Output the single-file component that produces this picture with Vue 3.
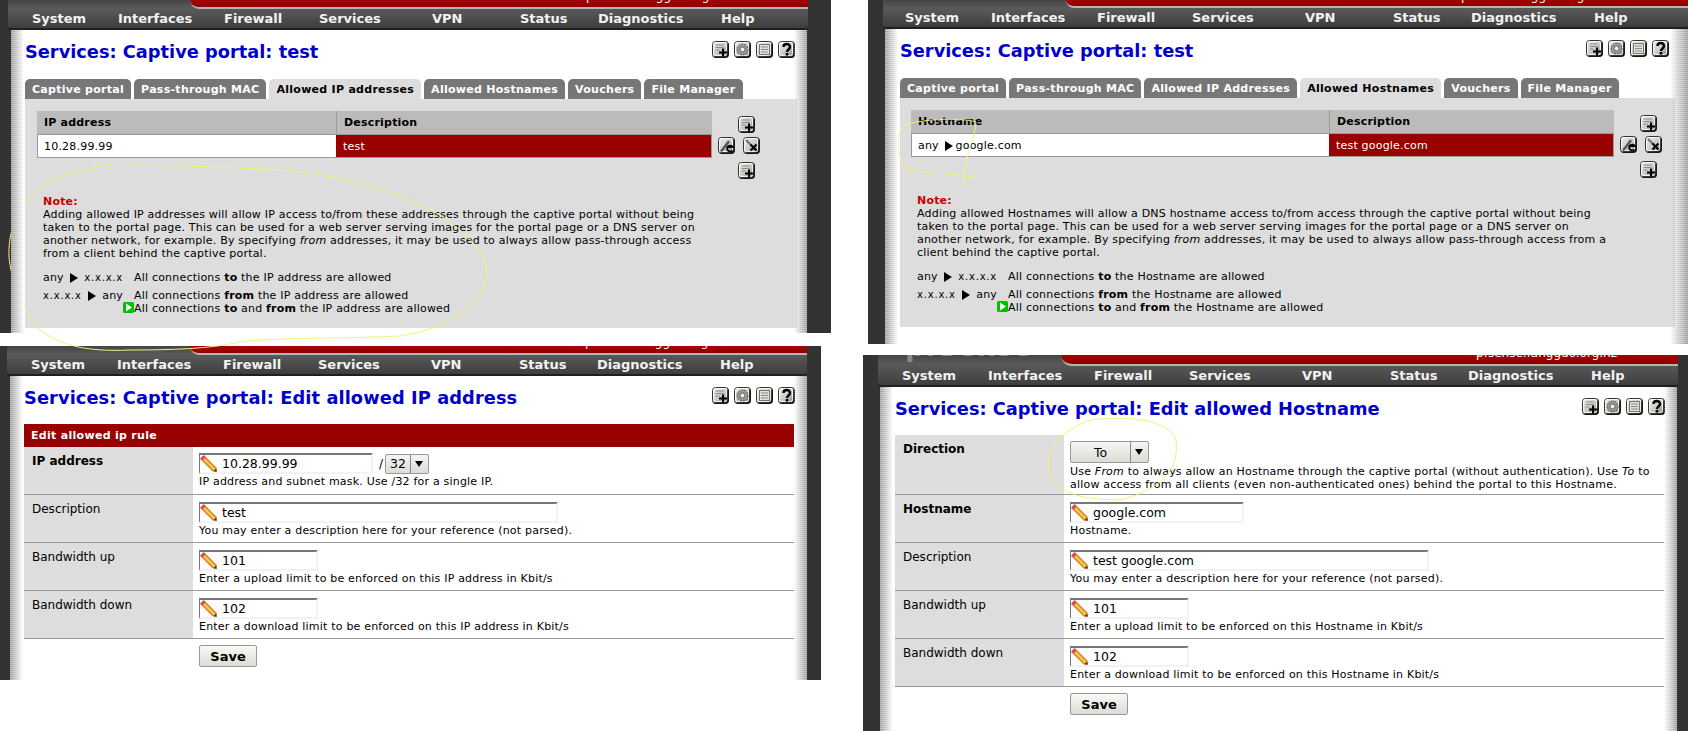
<template>
  <div class="canvas">
    <svg class="defs" width="0" height="0">
      <defs>
        <linearGradient id="bevel" x1="0" y1="0" x2="1" y2="1">
          <stop offset="0" stop-color="#f4f4f0" />
          <stop offset="0.55" stop-color="#c8c8c2" />
          <stop offset="1" stop-color="#77776f" />
        </linearGradient>
        <symbol id="i-box" viewBox="0 0 17 17">
          <rect x="0.5" y="0.5" width="16" height="16" rx="3" fill="url(#bevel)" stroke="#33332f" />
          <rect x="1.5" y="1.5" width="13" height="13" rx="2" fill="none" stroke="#fff" stroke-opacity="0.8" />
          <path d="M16 2.500v11a2.500 2.500 0 0 1-2.500 2.500H2.500" fill="none" stroke="#111" stroke-width="1.500" />
        </symbol>
        <symbol id="i-plus" viewBox="0 0 17 17">
          <use href="#i-box" width="17" height="17" />
          <path d="M3.5 4h8M3.5 6.5h8M3.5 9h4" stroke="#8a8a84" stroke-width="1" />
          <path d="M11 7.5v8M7 11.5h8" stroke="#000" stroke-width="2" />
        </symbol>
        <symbol id="i-gear" viewBox="0 0 17 17">
          <use href="#i-box" width="17" height="17" />
          <circle cx="8.5" cy="8.5" r="5.5" fill="#9a9a94" stroke="#55554f" stroke-dasharray="2 1" />
          <circle cx="8.5" cy="8.5" r="2.5" fill="#eee" stroke="#66665f" />
        </symbol>
        <symbol id="i-list" viewBox="0 0 17 17">
          <use href="#i-box" width="17" height="17" />
          <rect x="3.5" y="3.5" width="10" height="10" fill="#e2e2dc" stroke="#77776f" />
          <path d="M5 6h7M5 8.5h7M5 11h7" stroke="#8a8a84" />
        </symbol>
        <symbol id="i-help" viewBox="0 0 17 17">
          <use href="#i-box" width="17" height="17" />
          <path d="M5.5 6c0-4 6.500-4 6.500 0 0 2.500-3 2.500-3 5" fill="none" stroke="#000" stroke-width="2.400" />
          <rect x="7.700" y="12" width="2.600" height="2.600" fill="#000" />
        </symbol>
        <symbol id="i-edit" viewBox="0 0 17 17">
          <use href="#i-box" width="17" height="17" />
          <path d="M2 14L10 3.500l2 1.500L4 15z" fill="#55554f" />
          <path d="M14.500 13.500a3 3 0 1 1 .2-3.500H8.500" fill="none" stroke="#000" stroke-width="1.800" />
        </symbol>
        <symbol id="i-del" viewBox="0 0 17 17">
          <use href="#i-box" width="17" height="17" />
          <path d="M3 3l5 5" stroke="#77776f" stroke-width="2.400" />
          <path d="M7.500 7.500l6 6M13.500 7.500l-6 6" stroke="#000" stroke-width="2.200" />
        </symbol>
        <symbol id="i-pencil" viewBox="0 0 18 18">
          <path d="M0.500 4L4 0.500 17 13.500 17.500 17.500 13.500 17z" fill="#f2a11f" stroke="#a8560a" stroke-width="0.8" />
          <path d="M3.500 3.500L15.500 15.500" stroke="#fbd67a" stroke-width="1.400" />
          <path d="M0.500 4L4 0.500 6 2.500 2.500 6z" fill="#e8406a" />
          <path d="M14.500 17l2.500-2.500 .5 3z" fill="#333" />
        </symbol>
      </defs>
    </svg>

    <section v-for="p in listPanels" :key="p.id" class="win" :class="p.id">
      <header class="nav-wrap">
        <div class="brand"><span class="host">pfsense.fangguo.org.hz</span></div>
        <nav class="nav">
          <span v-for="m in menu" :key="m">{{ m }}</span>
        </nav>
      </header>
      <main class="page">
        <div class="title-row">
          <h1>{{ p.title }}</h1>
          <div class="tools">
            <svg v-for="t in tools" :key="t"><use :href="'#' + t" /></svg>
          </div>
        </div>
        <div class="tabs">
          <span v-for="t in p.tabs" :key="t" class="tab" :class="{ active: t === p.active }">{{ t }}</span>
        </div>
        <div class="tab-body">
          <div class="list-row">
            <div class="table">
              <div class="th col1">{{ p.col }}</div>
              <div class="th col2">Description</div>
              <div class="td col1">
                <template v-if="p.any">any <i class="tri"></i> </template>{{ p.value }}
              </div>
              <div class="td col2 red">{{ p.desc }}</div>
            </div>
            <div class="row-icons">
              <svg class="plus"><use href="#i-plus" /></svg>
              <div class="pair">
                <svg><use href="#i-edit" /></svg>
                <svg><use href="#i-del" /></svg>
              </div>
              <svg class="plus last"><use href="#i-plus" /></svg>
            </div>
          </div>
          <div class="note">
            <div class="note-head">Note:</div>
            <p>
              {{ p.note[0] }}<br />{{ p.note[1] }}<br />{{ p.note[2] }}<em>from</em>{{ p.note[3] }}<br />{{ p.note[4] }}
            </p>
            <div class="legend first">
              <span class="dir">any <i class="tri"></i> <span class="xs">x.x.x.x</span></span>
              <span>All connections <b>to</b> the {{ p.noun }} are allowed</span>
            </div>
            <div class="legend second">
              <span class="dir"><span class="xs">x.x.x.x</span> <i class="tri"></i> any</span>
              <span>All connections <b>from</b> the {{ p.noun }} are allowed</span>
            </div>
            <div class="legend">
              <span class="dir right">
                <svg class="green" viewBox="0 0 11 11">
                  <rect width="11" height="11" rx="1.500" fill="#00c000" />
                  <path d="M3 1.500L9 5.500 3 9.500z" fill="#fff" />
                </svg>
              </span>
              <span>All connections <b>to</b> and <b>from</b> the {{ p.noun }} are allowed</span>
            </div>
          </div>
        </div>
      </main>
    </section>

    <section v-for="p in editPanels" :key="p.id" class="win" :class="p.id">
      <header class="nav-wrap">
        <span v-if="p.logo" class="logo">{{ p.logo }}</span>
        <div class="brand">
          <span class="host">pfsense.fangguo.org.hz</span>
        </div>
        <nav class="nav">
          <span v-for="m in menu" :key="m">{{ m }}</span>
        </nav>
      </header>
      <main class="page">
        <div class="title-row">
          <h1>{{ p.title }}</h1>
          <div class="tools">
            <svg v-for="t in tools" :key="t"><use :href="'#' + t" /></svg>
          </div>
        </div>
        <div class="form">
          <div v-if="p.bar" class="bar">{{ p.bar }}</div>
          <div v-for="r in p.rows" :key="r.label" class="form-row">
            <div class="label" :class="{ strong: r.strong }">{{ r.label }}</div>
            <div class="field">
              <div v-if="r.select" class="select wide">
                <span>{{ r.select }}</span><i></i>
              </div>
              <div v-else class="input-line">
                <div class="input" :class="r.size">
                  <svg><use href="#i-pencil" /></svg>{{ r.value }}
                </div>
                <template v-if="r.mask">
                  <span class="slash">/</span>
                  <div class="select"><span>{{ r.mask }}</span><i></i></div>
                </template>
              </div>
              <div class="hint">
                <template v-if="r.select">
                  Use <em>From</em> to always allow an Hostname through the captive portal (without authentication). Use <em>To</em> to<br />allow access from all clients (even non-authenticated ones) behind the portal to this Hostname.
                </template>
                <template v-else>{{ r.hint }}</template>
              </div>
            </div>
          </div>
          <div class="save-row">
            <button type="button" class="save">Save</button>
          </div>
        </div>
      </main>
    </section>

    <!-- yellow marker scribbles drawn over the screenshots -->
    <svg class="scribble" viewBox="0 0 1688 731" width="1688" height="731" fill="none">
      <path d="M113 164C80 170 52 176 34 192 14 212 8 236 9 258 12 285 24 310 40 330 60 345 85 352 130 350 170 350 210 349 240 342 280 337 340 339 400 336 440 330 478 310 486 280 490 255 470 235 435 212 395 190 345 178 290 170 240 168 175 165 130 165"
        stroke="#f2f27a" stroke-width="1" />
      <path d="M905 125C925 118 965 118 976 122 975 140 962 160 964 185M976 178C950 172 915 174 905 168 896 150 895 135 905 125" stroke="#f2f27a" stroke-width="1" />
      <path d="M1090 420C1075 425 1048 440 1048 465 1050 490 1075 500 1120 500 1160 490 1180 470 1176 440 1170 420 1130 415 1090 420Z" stroke="#f2f27a" stroke-width="1" />
    </svg>
  </div>
</template>

<script setup>
const menu = ['System', 'Interfaces', 'Firewall', 'Services', 'VPN', 'Status', 'Diagnostics', 'Help']
const tools = ['i-plus', 'i-gear', 'i-list', 'i-help']

const listPanels = [
  {
    id: 'p1',
    title: 'Services: Captive portal: test',
    tabs: ['Captive portal', 'Pass-through MAC', 'Allowed IP addresses', 'Allowed Hostnames', 'Vouchers', 'File Manager'],
    active: 'Allowed IP addresses',
    col: 'IP address',
    any: false,
    value: '10.28.99.99',
    desc: 'test',
    noun: 'IP address',
    note: [
      'Adding allowed IP addresses will allow IP access to/from these addresses through the captive portal without being',
      'taken to the portal page. This can be used for a web server serving images for the portal page or a DNS server on',
      'another network, for example. By specifying ',
      ' addresses, it may be used to always allow pass-through access',
      'from a client behind the captive portal.',
    ],
  },
  {
    id: 'p2',
    title: 'Services: Captive portal: test',
    tabs: ['Captive portal', 'Pass-through MAC', 'Allowed IP Addresses', 'Allowed Hostnames', 'Vouchers', 'File Manager'],
    active: 'Allowed Hostnames',
    col: 'Hostname',
    any: true,
    value: 'google.com',
    desc: 'test google.com',
    noun: 'Hostname',
    note: [
      'Adding allowed Hostnames will allow a DNS hostname access to/from access through the captive portal without being',
      'taken to the portal page. This can be used for a web server serving images for the portal page or a DNS server on',
      'another network, for example. By specifying ',
      ' addresses, it may be used to always allow pass-through access from a',
      'client behind the captive portal.',
    ],
  },
]

const editPanels = [
  {
    id: 'p3',
    title: 'Services: Captive portal: Edit allowed IP address',
    bar: 'Edit allowed ip rule',
    rows: [
      { label: 'IP address', strong: true, value: '10.28.99.99', size: 'mid', mask: '32', hint: 'IP address and subnet mask. Use /32 for a single IP.' },
      { label: 'Description', value: 'test', size: 'long', hint: 'You may enter a description here for your reference (not parsed).' },
      { label: 'Bandwidth up', value: '101', size: 'short', hint: 'Enter a upload limit to be enforced on this IP address in Kbit/s' },
      { label: 'Bandwidth down', value: '102', size: 'short', hint: 'Enter a download limit to be enforced on this IP address in Kbit/s' },
    ],
  },
  {
    id: 'p4',
    logo: 'pfSense',
    title: 'Services: Captive portal: Edit allowed Hostname',
    rows: [
      { label: 'Direction', strong: true, select: 'To' },
      { label: 'Hostname', strong: true, value: 'google.com', size: 'mid', hint: 'Hostname.' },
      { label: 'Description', value: 'test google.com', size: 'long', hint: 'You may enter a description here for your reference (not parsed).' },
      { label: 'Bandwidth up', value: '101', size: 'short', hint: 'Enter a upload limit to be enforced on this Hostname in Kbit/s' },
      { label: 'Bandwidth down', value: '102', size: 'short', hint: 'Enter a download limit to be enforced on this Hostname in Kbit/s' },
    ],
  },
]
</script>

<style>
html,
body {
  margin: 0;
  background: #fff;
  overflow: hidden;
}
</style>

<style scoped>
.canvas {
  position: relative;
  width: 1688px;
  height: 731px;
  overflow: hidden;
  background: #fff;
  font-family: 'DejaVu Sans', Verdana, sans-serif;
  font-size: 11px;
  color: #000;
}

.defs {
  position: absolute;
}

/* the four pasted screenshots sit freely on the canvas */
.win {
  position: absolute;
  overflow: hidden;
  background: #333;
}

.p1 {
  left: 0;
  top: 0;
  width: 831px;
  height: 333px;
  --nav-l: 8px;
  --page-l: 11px;
  --page-w: 796px;
  --nav-w: 800px;
  --red-l: 182px;
  --brand-h: 7px;
  --host-r: 81px;
  --host-b: 4px;
}

.p2 {
  left: 868px;
  top: 0;
  width: 820px;
  height: 344px;
  --nav-l: 15px;
  --page-l: 17px;
  --page-w: 803px;
  --nav-w: 805px;
  --red-l: 183px;
  --brand-h: 6px;
  --host-r: 86px;
  --host-b: 3px;
}

.p3 {
  left: 0;
  top: 346px;
  width: 821px;
  height: 334px;
  --nav-l: 7px;
  --page-l: 10px;
  --page-w: 797px;
  --nav-w: 800px;
  --red-l: 183px;
  --brand-h: 7px;
  --host-r: 81px;
  --host-b: 4px;
}

.p4 {
  left: 863px;
  top: 355px;
  width: 825px;
  height: 376px;
  --nav-l: 15px;
  --page-l: 17px;
  --page-w: 797px;
  --nav-w: 800px;
  --red-l: 183px;
  --brand-h: 9px;
  --host-r: 61px;
  --host-b: 4px;
}

.nav-wrap {
  position: relative;
  overflow: hidden;
  margin-left: var(--nav-l);
  width: var(--nav-w);
  background: linear-gradient(#444, #5a5a5a 30%, #3e3e3e);
  border-bottom: 2px solid #1f1f1f;
  border-radius: 0 0 3px 3px;
}

/* only the foot of the logo shows above the nav in the cropped shot */
.logo {
  position: absolute;
  left: 27px;
  top: -22px;
  color: #8a8a8a;
  font-size: 28px;
  line-height: 28px;
  font-weight: 700;
}

.brand {
  height: var(--brand-h);
  margin-left: var(--red-l);
  background: linear-gradient(#a80000, #8f0000);
  border-bottom: 2px solid #b5b5b5;
  border-bottom-left-radius: 12px;
  overflow: hidden;
  position: relative;
}

.host {
  position: absolute;
  right: var(--host-r);
  bottom: var(--host-b);
  color: #fff;
  font-size: 12px;
  line-height: 13px;
  white-space: nowrap;
}

.nav {
  display: grid;
  grid-template-columns: 86px 106px 95px 113px 88px 78px 123px 1fr;
  padding: 2px 0 0 24px;
  height: 17px;
  color: #f2f2f2;
  font-size: 13px;
  font-weight: 700;
  line-height: 16px;
}

.p2 .nav {
  padding-left: 22px;
}

.page {
  position: relative;
  margin-left: var(--page-l);
  width: var(--page-w);
  height: 100%;
  background: #fff;
  padding-left: 14px;
  box-sizing: border-box;
}

.p2 .page,
.p4 .page {
  padding-left: 15px;
}

.page::before,
.page::after {
  content: '';
  position: absolute;
  top: 0;
  bottom: 0;
  width: 13px;
  z-index: 2;
}

.page::before {
  left: 0;
  background:
    repeating-linear-gradient(0deg, rgba(255, 255, 255, 0.35) 0 1px, transparent 1px 2px),
    linear-gradient(90deg, #9a9a9a, #fff);
}

.page::after {
  right: 0;
  background:
    repeating-linear-gradient(0deg, rgba(255, 255, 255, 0.35) 0 1px, transparent 1px 2px),
    linear-gradient(270deg, #9a9a9a, rgba(255, 255, 255, 0));
}

.p2 .page::after {
  width: 18px;
}

.title-row {
  position: relative;
  height: 49px;
}

h1 {
  margin: 0;
  padding-top: 11px;
  color: #0000cc;
  font-size: 17.800px;
  line-height: 22px;
  font-weight: 700;
}

.p3 h1 {
  letter-spacing: 0.1px;
}

.tools {
  position: absolute;
  top: 11px;
  right: 12px;
  display: flex;
  gap: 5px;
}

.p2 .tools {
  right: 19px;
}

.tools svg,
.row-icons svg {
  width: 17px;
  height: 17px;
  display: block;
}

.tabs {
  display: flex;
  gap: 3px;
  height: 20px;
}

.tab {
  padding: 0 7px;
  background: #777;
  color: #fff;
  border-radius: 5px 5px 0 0;
  font-weight: 700;
  letter-spacing: 0.28px;
  line-height: 21px;
}

.tab.active {
  background: #ddd;
  color: #000;
}

.tab-body {
  background: #ddd;
  margin-right: 10px;
  padding: 12px 0 0 12px;
  height: 229px;
  box-sizing: border-box;
}

.p2 .tab-body {
  margin-right: 13px;
  padding-left: 11px;
}

.list-row {
  display: flex;
  align-items: flex-start;
}

.table {
  display: grid;
  grid-template-columns: 299px 376px;
}

.p2 .table {
  grid-template-columns: 418px 285px;
}

.th {
  height: 23px;
  line-height: 23px;
  padding-left: 7px;
  background: #bbb;
  font-weight: 700;
  letter-spacing: 0.2px;
  border-bottom: 1px solid #999;
}

.th.col2 {
  border-left: 1px solid #999;
}

.td {
  height: 22px;
  line-height: 24px;
  padding-left: 6px;
  background: #fff;
  letter-spacing: 0.2px;
  border-bottom: 1px solid #999;
  border-left: 1px solid #999;
}

.td.red {
  background: #990000;
  color: #fff;
  border-left: 0;
  border-right: 1px solid #999;
  padding-left: 7px;
}

.tri {
  display: inline-block;
  width: 0;
  height: 0;
  border-left: 8px solid #000;
  border-top: 5px solid transparent;
  border-bottom: 5px solid transparent;
  margin: 0 3px 0 2px;
  vertical-align: -2px;
}

.row-icons {
  width: 42px;
  margin-left: 6px;
  padding-top: 5px;
  display: flex;
  flex-direction: column;
  align-items: flex-start;
  gap: 4px;
}

.row-icons .plus {
  margin-left: 20px;
}

.row-icons .plus.last {
  margin-top: 4px;
}

.pair {
  display: flex;
  gap: 8px;
}

.note {
  padding: 16px 0 0 6px;
  line-height: 13px;
  font-size: 11px;
  letter-spacing: 0.2px;
}

.note-head {
  color: #cc0000;
  font-weight: 700;
}

.note p {
  margin: 0 0 11px;
  white-space: nowrap;
}

.legend {
  display: flex;
  height: 13px;
  white-space: nowrap;
}

.legend.second {
  margin-top: 5px;
}

.dir {
  width: 91px;
  flex: none;
}

.dir.right {
  display: flex;
  justify-content: flex-end;
}

.xs {
  font-size: 10px;
  letter-spacing: 0.8px;
}

.green {
  width: 11px;
  height: 11px;
}

/* edit forms */
.form {
  margin-top: -1px;
  margin-right: 13px;
}

.bar {
  height: 23px;
  line-height: 23px;
  padding-left: 7px;
  background: #990000;
  color: #fff;
  font-size: 11px;
  font-weight: 700;
  letter-spacing: 0.3px;
}

.form-row {
  display: flex;
  min-height: 47px;
  border-bottom: 1px solid #999;
}

.label {
  width: 161px;
  flex: none;
  padding: 7px 0 0 8px;
  background: #ddd;
  font-size: 12px;
  line-height: 14px;
}

.label.strong {
  font-weight: 700;
}

.field {
  padding: 7px 0 3px 6px;
  flex: 1;
}

.form-row:first-of-type .field,
.bar + .form-row .field {
  padding-top: 6px;
}

.input-line {
  display: flex;
  align-items: center;
}

.input {
  display: flex;
  align-items: center;
  height: 17px;
  box-sizing: content-box;
  border-top: 2px solid #777;
  border-left: 1px solid #777;
  border-right: 2px solid #f2f2f2;
  border-bottom: 2px solid #f2f2f2;
  font-size: 12.500px;
  background: #fff;
}

.input svg {
  width: 17px;
  height: 17px;
  margin-right: 5px;
  flex: none;
}

.input.short {
  width: 116px;
}

.input.mid {
  width: 171px;
}

.input.long {
  width: 356px;
}

.slash {
  margin: 0 2px 0 6px;
  font-size: 12px;
}

.select {
  display: flex;
  align-items: center;
  width: 42px;
  height: 18px;
  border: 1px solid #999;
  border-radius: 2px;
  background: linear-gradient(#f6f6f2, #dcdcd6);
  font-size: 12.500px;
  box-sizing: content-box;
}

.select span {
  flex: 1;
  text-align: center;
}

.select i {
  width: 17px;
  height: 100%;
  border-left: 1px solid #888;
  position: relative;
}

.select i::after {
  content: '';
  position: absolute;
  left: 4px;
  top: 6px;
  border-top: 6px solid #000;
  border-left: 4px solid transparent;
  border-right: 4px solid transparent;
}

.select.wide {
  width: 77px;
  height: 20px;
  margin-bottom: 2px;
}

.select.wide i::after {
  top: 7px;
}

.hint {
  margin-top: 1px;
  font-size: 11px;
  letter-spacing: 0.2px;
  line-height: 13px;
  white-space: nowrap;
}

.save-row {
  padding: 6px 0 0 175px;
}

.save {
  width: 58px;
  height: 22px;
  padding: 0;
  border: 1px solid #999;
  border-radius: 2px;
  background: linear-gradient(#f8f8f4, #dcdcd6);
  font-family: inherit;
  font-size: 13px;
  font-weight: 700;
  color: #000;
}

.scribble {
  position: absolute;
  left: 0;
  top: 0;
  pointer-events: none;
}
</style>
